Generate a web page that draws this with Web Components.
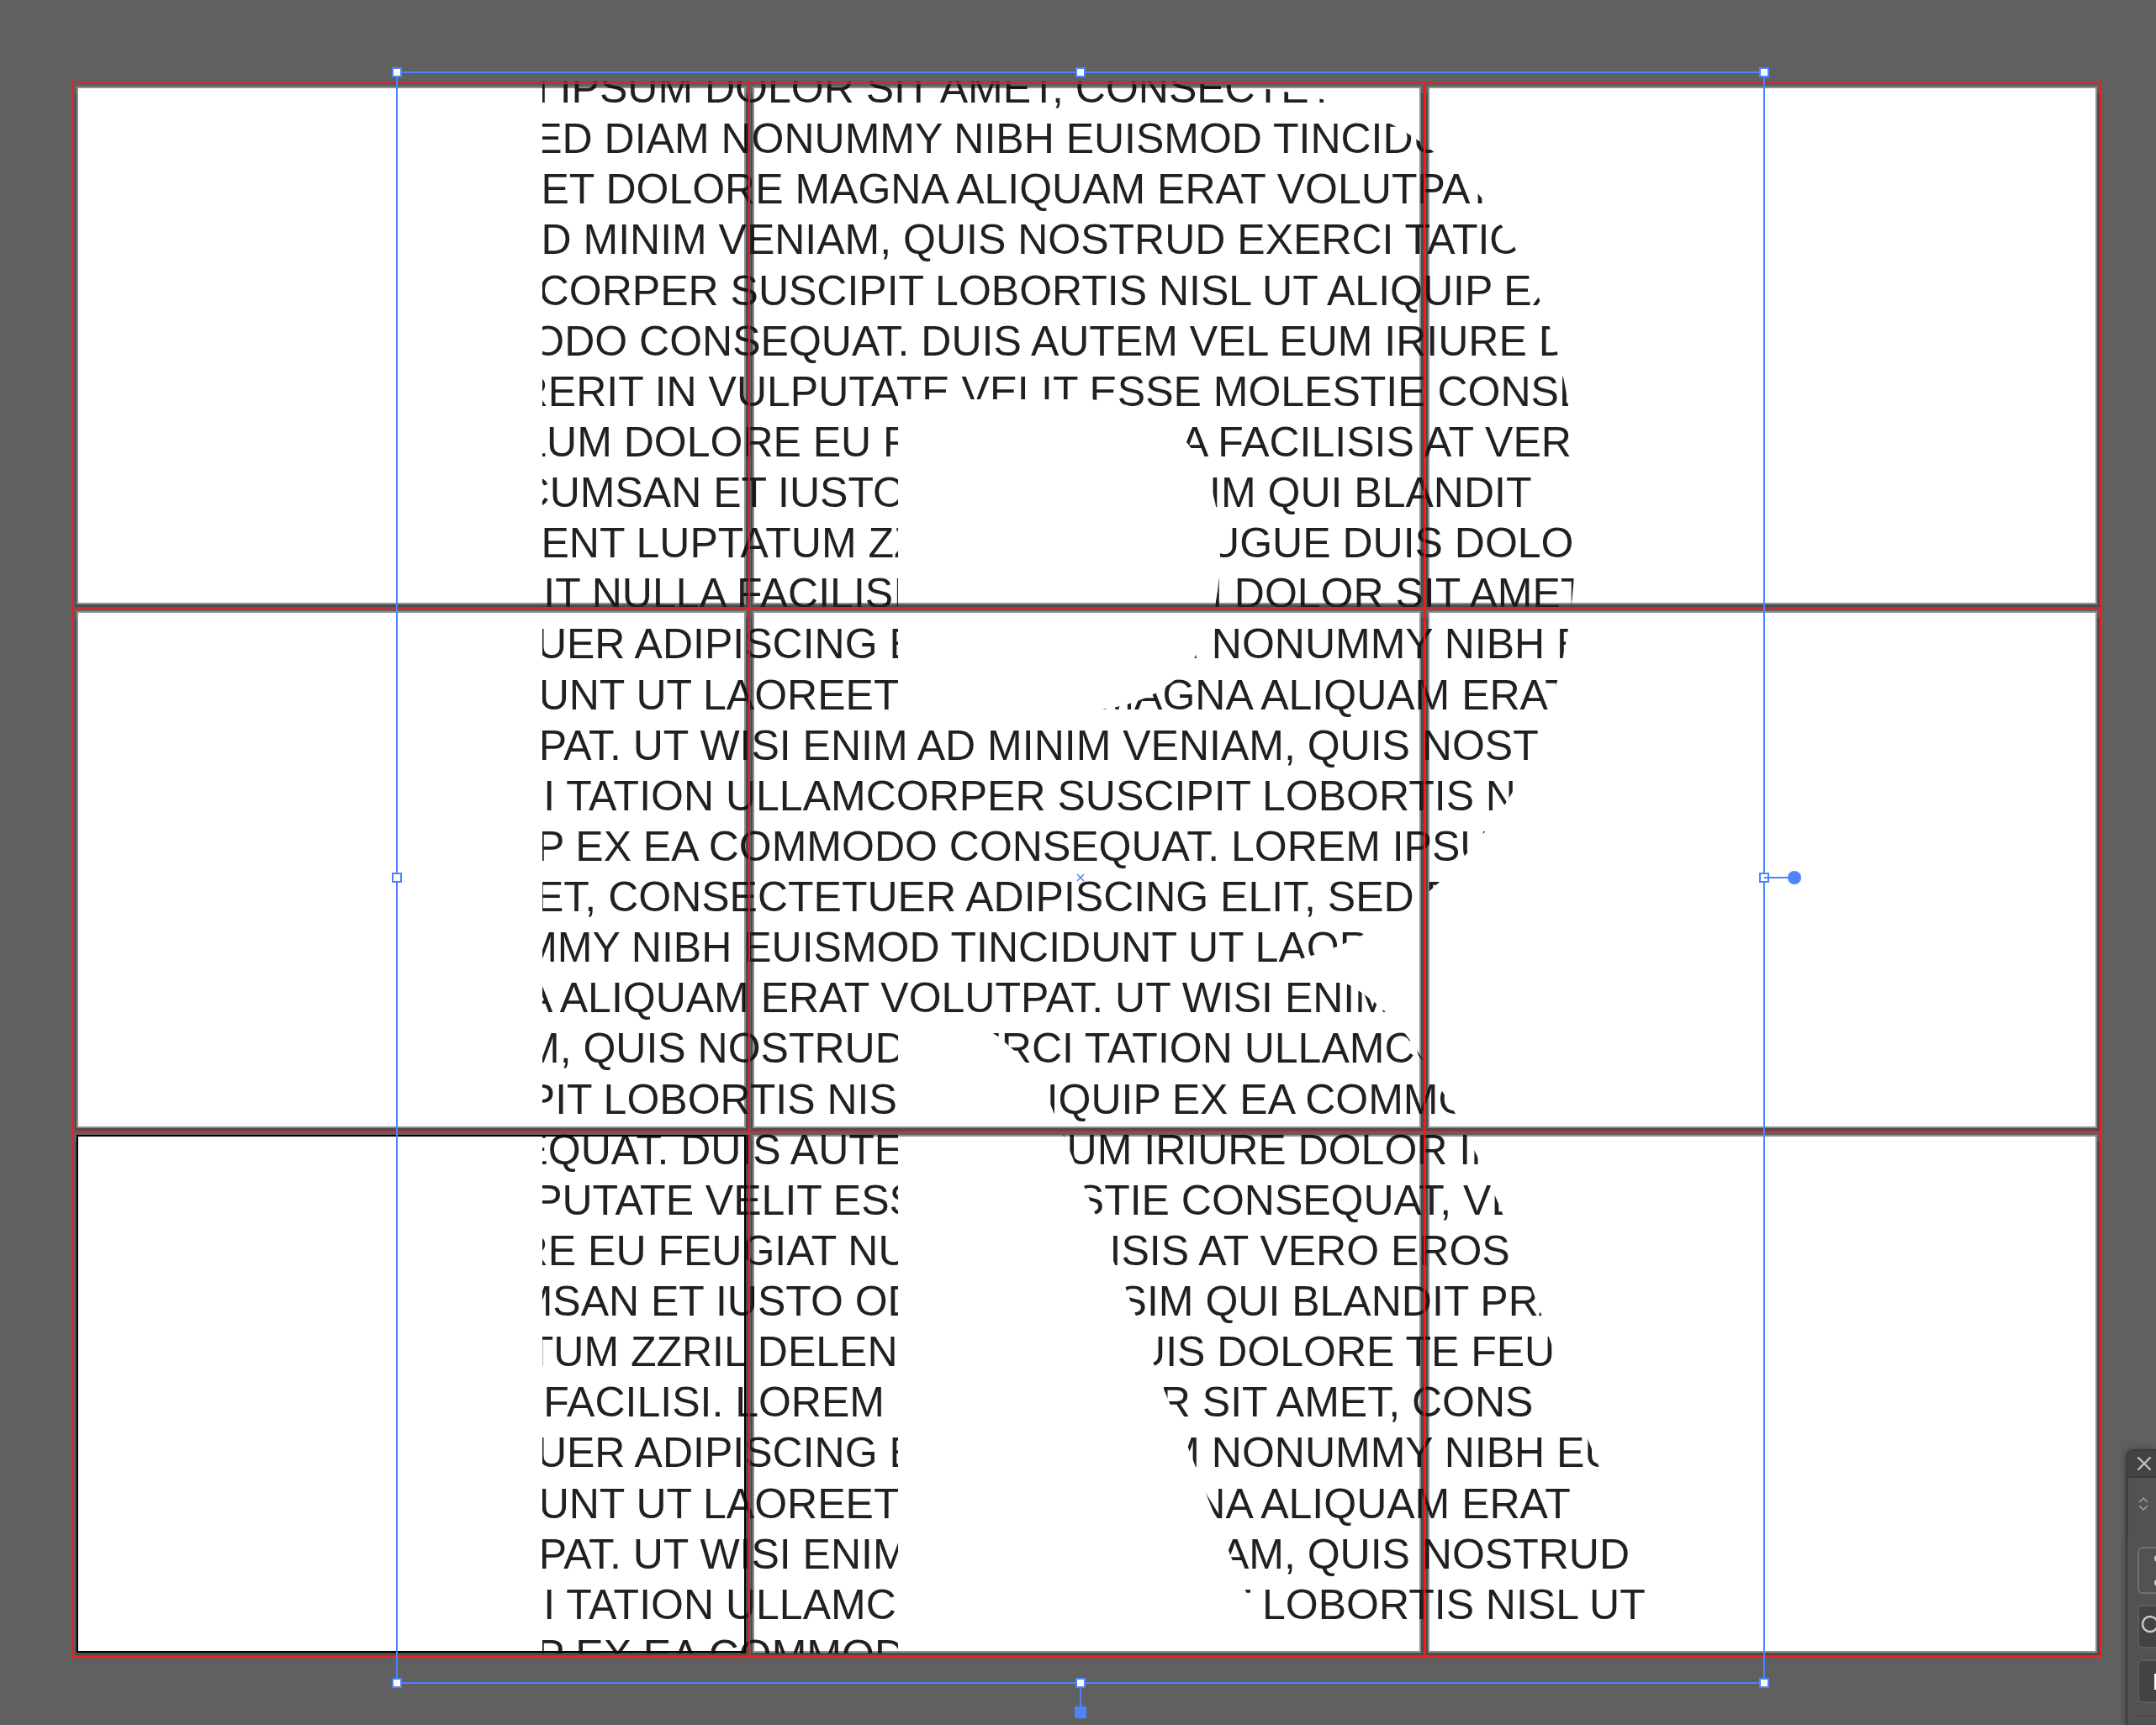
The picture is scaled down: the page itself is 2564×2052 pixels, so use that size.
<!DOCTYPE html>
<html lang="la">
<head>
<meta charset="utf-8">
<title>Artboards</title>
<style>
  html, body { margin: 0; height: 100%; }
  body { background: #606060; overflow: hidden; font-family: "Liberation Sans", Arial, sans-serif; }
</style>
</head>
<body>
<art-canvas>
  <board-grid slot="boards">
    <art-board></art-board><art-board></art-board><art-board></art-board>
    <art-board></art-board><art-board></art-board><art-board></art-board>
    <art-board active></art-board><art-board></art-board><art-board></art-board>
  </board-grid>
  <type-area>
    <type-line>LOREM IPSUM DOLOR SIT AMET, CONSECTETUER</type-line>
    <type-line>ELIT, SED DIAM NONUMMY NIBH EUISMOD TINCIDUNT</type-line>
    <type-line>LAOREET DOLORE MAGNA ALIQUAM ERAT VOLUTPAT.</type-line>
    <type-line>ENIM AD MINIM VENIAM, QUIS NOSTRUD EXERCI TATION</type-line>
    <type-line>ULLAMCORPER SUSCIPIT LOBORTIS NISL UT ALIQUIP EX</type-line>
    <type-line>COMMODO CONSEQUAT. DUIS AUTEM VEL EUM IRIURE DOLOR</type-line>
    <type-line>HENDRERIT IN VULPUTATE VELIT ESSE MOLESTIE CONSEQUAT,</type-line>
    <type-line>VEL ILLUM DOLORE EU FEUGIAT NULLA FACILISIS AT VER</type-line>
    <type-line>ET ACCUMSAN ET IUSTO ODIO DIGNISSIM QUI BLANDIT</type-line>
    <type-line>PRAESENT LUPTATUM ZZRIL DELENIT AUGUE DUIS DOLO</type-line>
    <type-line>FEUGAIT NULLA FACILISI. LOREM IPSUM DOLOR SIT AMET,</type-line>
    <type-line>ECTETUER ADIPISCING ELIT, SED DIAM NONUMMY NIBH EUISMOD</type-line>
    <type-line>TINCIDUNT UT LAOREET DOLORE MAGNA ALIQUAM ERAT</type-line>
    <type-line>VOLUTPAT. UT WISI ENIM AD MINIM VENIAM, QUIS NOST</type-line>
    <type-line>EXERCI TATION ULLAMCORPER SUSCIPIT LOBORTIS NISL</type-line>
    <type-line>ALIQUIP EX EA COMMODO CONSEQUAT. LOREM IPSUM</type-line>
    <type-line>SIT AMET, CONSECTETUER ADIPISCING ELIT, SED DIAM</type-line>
    <type-line>NONUMMY NIBH EUISMOD TINCIDUNT UT LAOREET</type-line>
    <type-line>MAGNA ALIQUAM ERAT VOLUTPAT. UT WISI ENIM</type-line>
    <type-line>VENIAM, QUIS NOSTRUD EXERCI TATION ULLAMCORPER</type-line>
    <type-line>SUSCIPIT LOBORTIS NISL UT ALIQUIP EX EA COMMODO</type-line>
    <type-line>CONSEQUAT. DUIS AUTEM VEL EUM IRIURE DOLOR IN</type-line>
    <type-line>IN VULPUTATE VELIT ESSE MOLESTIE CONSEQUAT, VEL</type-line>
    <type-line>DOLORE EU FEUGIAT NULLA FACILISIS AT VERO EROS</type-line>
    <type-line>ACCUMSAN ET IUSTO ODIO DIGNISSIM QUI BLANDIT PRAESENT</type-line>
    <type-line>LUPTATUM ZZRIL DELENIT AUGUE DUIS DOLORE TE FEUGAIT</type-line>
    <type-line>NULLA FACILISI. LOREM IPSUM DOLOR SIT AMET, CONS</type-line>
    <type-line>ECTETUER ADIPISCING ELIT, SED DIAM NONUMMY NIBH EUISMOD</type-line>
    <type-line>TINCIDUNT UT LAOREET DOLORE MAGNA ALIQUAM ERAT</type-line>
    <type-line>VOLUTPAT. UT WISI ENIM AD MINIM VENIAM, QUIS NOSTRUD</type-line>
    <type-line>EXERCI TATION ULLAMCORPER SUSCIPIT LOBORTIS NISL UT</type-line>
    <type-line>ALIQUIP EX EA COMMODO</type-line>
  </type-area>
  <selection-box></selection-box>
  <tool-panel></tool-panel>
</art-canvas>

<script>
const define = (name, html) => customElements.define(name, class extends HTMLElement {
  constructor() {
    super();
    this.attachShadow({ mode: 'open' }).innerHTML = html;
  }
});

define('art-canvas', `
  <style>
    :host { display: flex; position: relative; isolation: isolate; box-sizing: border-box;
            height: 100vh; padding: 105px 72px 88px 93px; overflow: hidden; }
    ::slotted(board-grid) { flex: 1; }
  </style>
  <slot name="boards"></slot><slot></slot>`);

define('board-grid', `
  <style>
    :host { display: grid; grid-template: repeat(3, 1fr) / repeat(3, 1fr); gap: 12px; }
  </style>
  <slot></slot>`);

/* White page, drop shade below it, trim edge and red bleed line above the type. */
define('art-board', `
  <style>
    :host { display: block; position: relative; background: #fff; box-shadow: 0 0 0 2px #fff; }
    :host::before { content: ""; position: absolute; inset: 6px -5px -5px -4px; background: #4d4d4d; z-index: -1; }
    :host::after { content: ""; position: absolute; inset: -2px; z-index: 3;
      border: 2px solid var(--edge, rgba(0, 0, 0, .44)); outline: 2px solid #fb161b; outline-offset: 3px; }
    :host([active]) { --edge: #000; }
  </style>`);

/* Area type masked by the letter R. */
define('type-area', `
  <style>
    :host { display: grid; position: absolute; inset: 0; z-index: 2; box-sizing: border-box;
      padding: 75px 0 0 474px; grid-template-rows: repeat(32, 1fr); height: 1999px;
      color: #231f20; font-size: 50px; line-height: 60px; white-space: nowrap;
      clip-path: path(evenodd, "M645 97 H1380 C1450 97 1515 105 1572 118 C1610 127 1640 140 1655 148 C1693 168 1730 198 1759 232 C1790 268 1811 310 1831 357 C1845 392 1870 460 1871 560 L1873 655 C1872 710 1865 760 1852 810 L1833 867 C1823 893 1810 925 1791 955 C1770 986 1735 1030 1700 1060 C1670 1085 1630 1110 1590 1126 Q1560 1138 1520 1148 Q1565 1152 1605 1172 C1650 1198 1675 1232 1693 1262 Q1712 1292 1731 1325 Q1760 1378 1787 1444 Q1810 1500 1833 1564 L1847 1605 Q1875 1680 1902 1746 L1957 1893 L1985 1967 H1510 L1482 1894 L1464 1852 L1432 1771 L1413 1722 L1390 1667 L1373 1625 L1350 1563 L1338 1530 L1324 1500 L1301 1440 L1278 1383 L1253 1323 Q1235 1274 1202 1246 Q1166 1212 1130 1212 H1068 V1967 H645 Z M1068 475 H1285 C1390 475 1451 540 1451 655 C1451 785 1395 847 1265 847 H1068 Z"); }
  </style>
  <slot></slot>`);

define('type-line', `<style>:host { display: block; }</style><slot></slot>`);

define('selection-box', `
  <style>
    :host { display: grid; position: absolute; z-index: 4;
      inset: 86px 466px 50px 472px; outline: 2px solid #4d83fb; outline-offset: -1px; pointer-events: none;
      grid-template: repeat(3, auto) / repeat(3, auto); place-content: space-between;
      align-items: center; justify-items: center; }
    i { display: block; position: relative; z-index: 1; box-sizing: border-box; width: 12px; height: 12px; margin: -6px;
      border: 2px solid #4d83fb; background: #fff; }
    svg { display: block; width: 10px; height: 10px; }
    .port { position: absolute; z-index: 2; background: #4d83fb; }
    .right-arm { left: 100%; top: calc(50% - 1px); width: 30px; height: 2px; }
    .right-dot { left: calc(100% + 28px); top: calc(50% - 8px); width: 16px; height: 16px; border-radius: 50%; }
    .down-arm { top: calc(100% + 6px); left: calc(50% - 1px); width: 2px; height: 24px; }
    .down-dot { top: calc(100% + 28px); left: calc(50% - 7px); width: 14px; height: 14px; }
  </style>
  <i></i><i></i><i></i>
  <i></i><svg viewBox="0 0 10 10" stroke="#4d83fb" stroke-width="1.5"><path d="M1 1L9 9M9 1L1 9"/></svg><i></i>
  <i></i><i></i><i></i>
  <span class="port right-arm"></span><span class="port right-dot"></span>
  <span class="port down-arm"></span><span class="port down-dot"></span>`);

define('tool-panel', `
  <style>
    :host { display: flex; flex-direction: column; position: absolute; z-index: 5; right: 0; bottom: 0;
      box-sizing: border-box; width: 36px; height: 328px; border: 2px solid #3b3b3b;
      border-width: 2px 0 0 2px; border-radius: 10px 0 0 0; background: #525252;
      box-shadow: 0 0 10px rgba(0, 0, 0, .35); overflow: hidden; }
    header { display: flex; height: 30px; padding-left: 12px; align-items: center; background: #434343;
      border-bottom: 2px solid #3b3b3b; }
    .tab { display: flex; box-sizing: border-box; height: 70px; padding: 23px 0 0 13px; border-left: 1px solid #414141; }
    .tools { display: flex; flex-direction: column; gap: 13px; padding: 12px 0 0 12px; }
    button { display: flex; flex: none; box-sizing: border-box; width: 60px; height: 52px; padding: 0;
      border: 2px solid #5d5d5d; border-radius: 6px; background: #434343; }
    button.on { height: 56px; border-color: #707070; background: #525252; }
    header button { width: 16px; height: 16px; border: 0; background: none; }
    svg { display: block; flex: none; }
    hr { width: 60px; height: 2px; margin: 1px 0 0; border: 0; background: #484848; flex: none; }
  </style>
  <header><button aria-label="Close"><svg width="16" height="16" viewBox="0 0 16 16" stroke="#b8b8b8" stroke-width="2.4"><path d="M0 0L16 16M16 0L0 16"/></svg></button></header>
  <div class="tab"><svg width="10" height="16" viewBox="0 0 10 16" fill="none" stroke="#a4a4a4" stroke-width="1.4"><path d="M0 6L5 1L10 6M0 10L5 15L10 10"/></svg></div>
  <div class="tools">
    <button class="on" aria-label="Transform"><svg width="52" height="52" viewBox="0 0 52 52" fill="#d0d0d0"><circle cx="22" cy="12" r="4"/><circle cx="22" cy="41" r="4"/></svg></button>
    <button aria-label="Ellipse"><svg width="52" height="48" viewBox="0 0 52 48" fill="none" stroke="#c9c9c9" stroke-width="2.5"><circle cx="13" cy="21" r="9"/></svg></button>
    <button aria-label="Fill"><svg width="52" height="48" viewBox="0 0 52 48" fill="#fff"><path d="M18 15H40V34H18Z"/></svg></button>
    <hr>
  </div>`);
</script>
</body>
</html>
